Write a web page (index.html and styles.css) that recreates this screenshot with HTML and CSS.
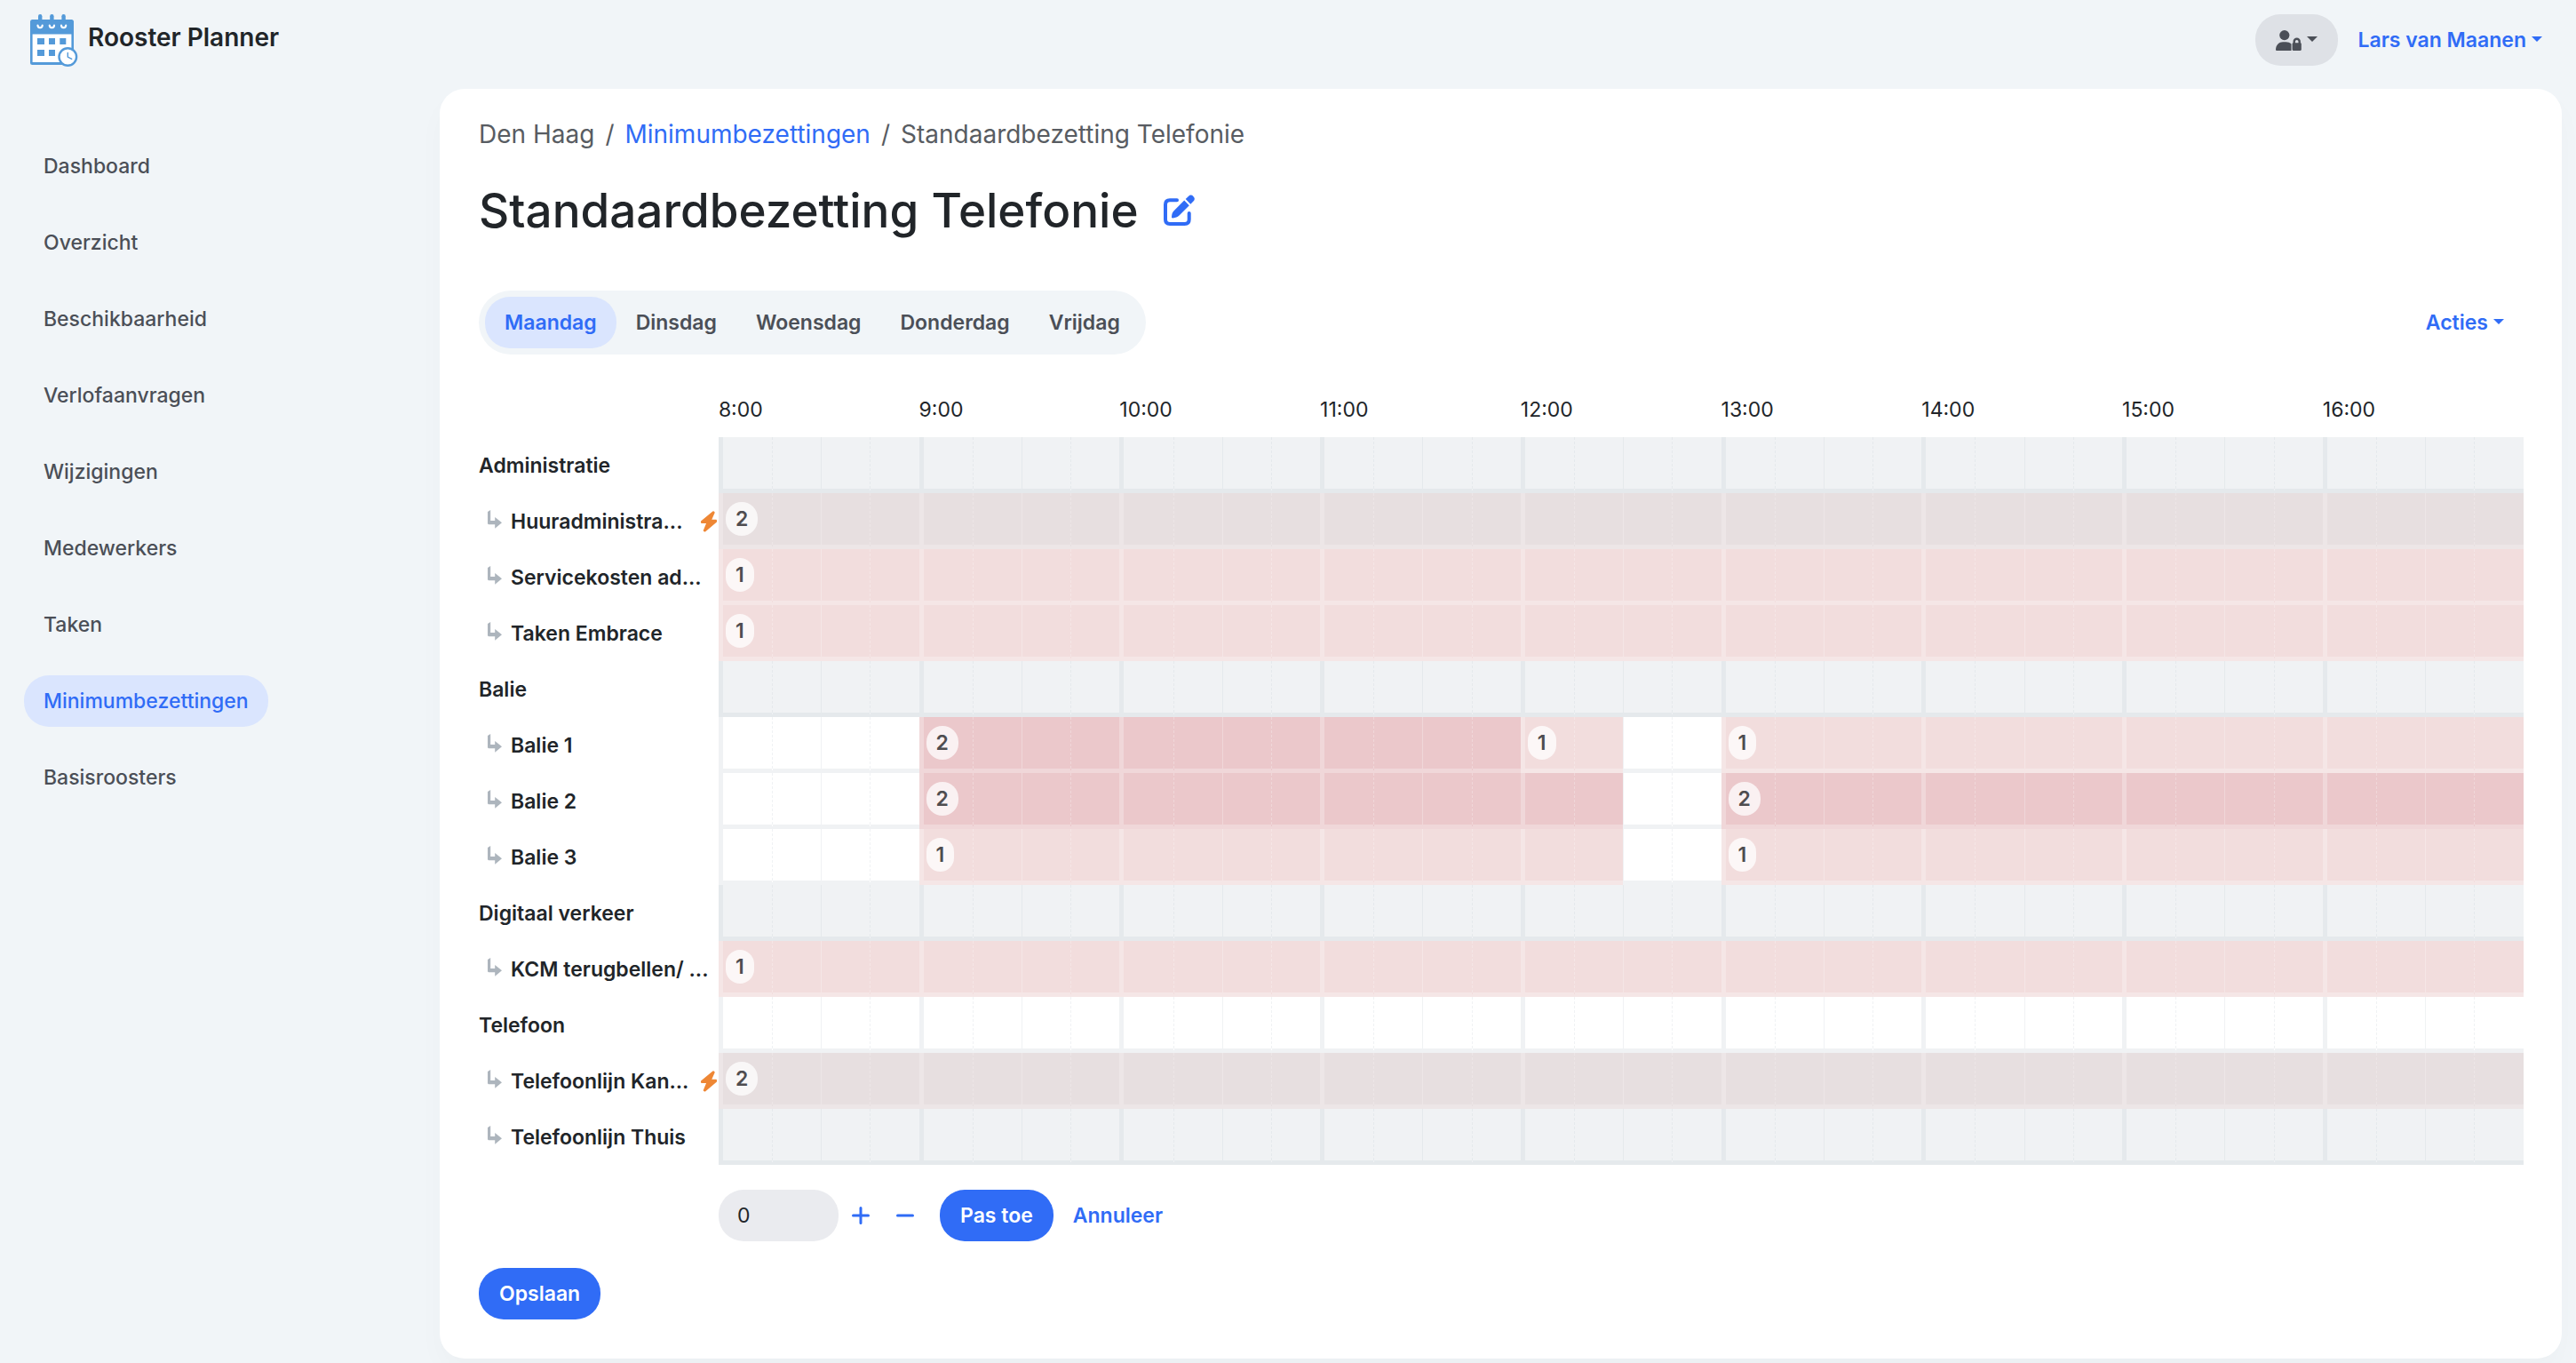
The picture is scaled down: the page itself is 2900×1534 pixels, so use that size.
FILE: index.html
```html
<!DOCTYPE html>
<html lang="nl">
<head>
  <meta charset="UTF-8">
  <meta name="viewport" content="width=device-width, initial-scale=1">
  <title>Rooster Planner</title>
  <link rel="stylesheet" href="styles.css">
</head>
<body>

  <header class="topbar">
    <a href="#" class="brand">
      <svg class="brand-logo" viewBox="0 0 54 60" aria-hidden="true">
        <rect x="0" y="6" width="49" height="51" rx="2.5" fill="#549ad9"/>
        <rect x="2.6" y="22.5" width="43.8" height="31.5" fill="#fff"/>
        <g fill="none" stroke="#fff" stroke-width="2.2" stroke-linecap="round">
          <path d="M8.5 12.5a2.6 2.6 0 0 0 5.2 0M21.8 12.5a2.6 2.6 0 0 0 5.2 0M35 12.5a2.6 2.6 0 0 0 5.2 0"/>
        </g>
        <g fill="#549ad9">
          <rect x="9" y="0" width="4.4" height="12" rx="2.2"/>
          <rect x="22.2" y="0" width="4.4" height="12" rx="2.2"/>
          <rect x="35.4" y="0" width="4.4" height="12" rx="2.2"/>
          <rect x="8" y="27" width="8" height="7"/>
          <rect x="21" y="27" width="7" height="7"/>
          <rect x="33.3" y="27" width="7" height="7"/>
          <rect x="8" y="40" width="8" height="7"/>
          <rect x="21" y="40" width="7" height="7"/>
        </g>
        <circle cx="42.3" cy="48" r="9.8" fill="#fff" stroke="#549ad9" stroke-width="2.4"/>
        <path d="M42.3 43.4V48l4.4 2.4" fill="none" stroke="#549ad9" stroke-width="1.4" stroke-linecap="round"/>
      </svg>
      <span>Rooster Planner</span>
    </a>
    <div class="topbar-actions">
      <button type="button" class="btn btn-grey caret" aria-label="Rol">
        <svg class="user-icon" viewBox="0 0 29 23" aria-hidden="true">
          <circle cx="9.8" cy="5.6" r="5.6"/>
          <path d="M0 22v-.5C.2 16.500 3.800 13.300 8 13.300h3.500c2.400 0 4.400.8 6 2.100V23H1a1 1 0 0 1-1-1z"/>
          <path d="M20 14.200h7.500q1.300 0 1.300 1.300v6q0 1.500-1.500 1.500h-7.200q-1.500 0-1.500-1.500v-6q0-1.300 1.400-1.300z"/>
          <path d="M20.700 15v-2.300a3 3 0 0 1 6 0V15" fill="none" stroke="#4b4f57" stroke-width="2.400"/>
        </svg>
      </button>
      <button type="button" class="btn btn-link caret">Lars van Maanen</button>
    </div>
  </header>

  <div class="layout">
    <nav class="sidebar">
      <a href="#">Dashboard</a>
      <a href="#">Overzicht</a>
      <a href="#">Beschikbaarheid</a>
      <a href="#">Verlofaanvragen</a>
      <a href="#">Wijzigingen</a>
      <a href="#">Medewerkers</a>
      <a href="#">Taken</a>
      <a href="#" class="active">Minimumbezettingen</a>
      <a href="#">Basisroosters</a>
    </nav>

    <main class="card">
      <div class="breadcrumb">
        <span>Den Haag</span>
        <span>/</span>
        <a href="#">Minimumbezettingen</a>
        <span>/</span>
        <span>Standaardbezetting Telefonie</span>
      </div>

      <div class="title">
        <h1>Standaardbezetting Telefonie</h1>
        <button type="button" class="edit" aria-label="Naam wijzigen">
          <svg viewBox="0 0 36 36" aria-hidden="true">
            <path d="M15 6.300H7Q2 6.300 2 11.300V28q0 5 5 5h16.700q5 0 5-5v-7" fill="none" stroke="#306cf6" stroke-width="4" stroke-linecap="round"/>
            <path d="M9 25.200c.2-3.300.8-5.200 2.800-7.200L23.200 6.600l5.600 5.600L17.500 23.500c-2 2-3.900 2.600-7.200 2.900-.9.1-1.400-.4-1.300-1.200z"/>
            <path d="M24.700 5.100l3.200-3.200q2.700-2.700 5.500 0 2.800 2.800.1 5.600l-3.200 3.200z"/>
          </svg>
        </button>
      </div>

      <div class="toolbar">
        <div class="tabs">
          <button type="button" class="btn active">Maandag</button>
          <button type="button" class="btn">Dinsdag</button>
          <button type="button" class="btn">Woensdag</button>
          <button type="button" class="btn">Donderdag</button>
          <button type="button" class="btn">Vrijdag</button>
        </div>
        <button type="button" class="btn btn-link caret">Acties</button>
      </div>

      <table class="planning">
        <colgroup id="cols"><col class="col-label"></colgroup>
        <thead>
          <tr id="hours"><td></td></tr>
        </thead>
        <tbody id="rows"></tbody>
      </table>

      <form class="apply">
        <input type="text" class="amount" value="0" aria-label="Aantal">
        <button type="button" class="step" aria-label="Meer">
          <svg viewBox="0 0 20 20" aria-hidden="true"><path d="M10 1.500v17M1.500 10h17"/></svg>
        </button>
        <button type="button" class="step" aria-label="Minder">
          <svg viewBox="0 0 20 20" aria-hidden="true"><path d="M1.500 10h17"/></svg>
        </button>
        <button type="button" class="btn btn-primary">Pas toe</button>
        <button type="button" class="btn btn-link">Annuleer</button>
      </form>

      <button type="button" class="btn btn-primary">Opslaan</button>
    </main>
  </div>

  <script>
    const startHour = 8;
    const endHour = 17;
    const quarters = (endHour - startHour) * 4;

    // spans: [first quarter, end quarter, minimum]
    const planning = [
      { name: 'Administratie', group: true, closed: true },
      { name: 'Huuradministra...', closed: true, bolt: true, spans: [[0, 36, 2]] },
      { name: 'Servicekosten ad...', spans: [[0, 36, 1]] },
      { name: 'Taken Embrace', spans: [[0, 36, 1]] },
      { name: 'Balie', group: true, closed: true },
      { name: 'Balie 1', spans: [[4, 16, 2], [16, 18, 1], [20, 36, 1]] },
      { name: 'Balie 2', spans: [[4, 18, 2], [20, 36, 2]] },
      { name: 'Balie 3', spans: [[4, 18, 1], [20, 36, 1]] },
      { name: 'Digitaal verkeer', group: true, closed: true },
      { name: 'KCM terugbellen/ ...', spans: [[0, 36, 1]] },
      { name: 'Telefoon', group: true },
      { name: 'Telefoonlijn Kan...', closed: true, bolt: true, spans: [[0, 36, 2]] },
      { name: 'Telefoonlijn Thuis', closed: true }
    ];

    const arrow = '<svg class="arrow" viewBox="0 0 16 26" aria-hidden="true"><path d="M0 2l3.200-2v12h5V8l7.800 6.300-7.800 6.400v-4.400H1.500Q0 16.300 0 14.800z"/></svg>';
    const bolt = '<svg class="bolt" viewBox="0 0 18 24" aria-hidden="true"><path d="M14 1.200L1 12v1h6.500L3.800 22.200l.8.400L17 12v-1.200h-6.300l4-8.900z"/></svg>';

    const cols = document.getElementById('cols');
    const hours = document.getElementById('hours');
    for (let h = startHour; h < endHour; h++) {
      cols.innerHTML += '<col class="col-hour"><col><col><col>';
      hours.innerHTML += `<th scope="col" colspan="4">${h}:00</th>`;
    }

    function renderCell(row, q) {
      const span = (row.spans || []).find(s => q >= s[0] && q < s[1]);
      const line = q % 4 === 0 ? 'hour' : q % 4 === 2 ? 'half' : 'quarter';
      const classes = [line];
      if (row.closed) classes.push('closed');
      if (span) classes.push('min-' + span[2]);
      const badge = span && span[0] === q ? `<span class="badge">${span[2]}</span>` : '';
      return `<td class="${classes.join(' ')}">${badge}</td>`;
    }

    document.getElementById('rows').innerHTML = planning.map(row => {
      let cells = '';
      for (let q = 0; q < quarters; q++) cells += renderCell(row, q);
      return `<tr>
        <th scope="row"><div class="label ${row.group ? '' : 'child'}">
          ${row.group ? '' : arrow}<span>${row.name}</span>${row.bolt ? bolt : ''}
        </div></th>${cells}
      </tr>`;
    }).join('');
  </script>

</body>
</html>
```
FILE: styles.css
```css
* {
  box-sizing: border-box;
}

body {
  margin: 0;
  background: #f1f5f8;
  color: #212529;
  font-family: Inter, "Liberation Sans", sans-serif;
  font-size: 23px;
  line-height: 34px;
}

a {
  color: #306cf6;
  text-decoration: none;
}

button, input {
  font: inherit;
  border: 0;
  background: none;
}

button {
  cursor: pointer;
  padding: 0;
}

svg {
  display: block;
  fill: currentColor;
}

/* Buttons */
.btn {
  display: inline-flex;
  align-items: center;
  height: 58px;
  padding: 0 23px;
  border-radius: 28px;
  color: #4b4f57;
  font-weight: 600;
  white-space: nowrap;
}

.btn-grey {
  background: #dee1e6;
}

.btn-link {
  padding: 0 22px;
  color: #306cf6;
}

.btn-primary {
  background: #306cf6;
  color: #fff;
}

.caret::after {
  content: "";
  margin-left: 6px;
  margin-bottom: 2px;
  border: 6px solid transparent;
  border-top-color: currentColor;
  border-bottom: 0;
}

/* Header */
.topbar {
  display: flex;
  justify-content: space-between;
  padding: 16px 16px 26px 34px;
}

.brand {
  display: flex;
  height: 58px;
  gap: 11px;
  color: #212529;
  font-size: 28px;
  font-weight: 600;
  line-height: 53px;
}

.brand-logo {
  width: 54px;
  height: 60px;
}

.topbar-actions {
  display: flex;
}

.user-icon {
  width: 29px;
  height: 23px;
}

/* Layout */
.layout {
  display: flex;
}

.sidebar {
  flex: 0 0 495px;
  display: flex;
  flex-direction: column;
  align-items: flex-start;
  gap: 28px;
  padding: 58px 27px;
}

.sidebar a {
  padding: 12px 22px;
  border-radius: 28px;
  color: #4b4f57;
  font-weight: 500;
}

.sidebar a.active {
  background: #dae5fe;
  color: #306cf6;
}

.card {
  flex: 1;
  min-width: 0;
  margin: 0 16px 6px 0;
  padding: 30px 43px 44px 44px;
  border-radius: 28px;
  background: #fff;
  box-shadow: 0 16px 32px rgba(0, 0, 0, 0.025);
}

.breadcrumb {
  display: flex;
  gap: 12px;
  color: #585c62;
  font-size: 28px;
  line-height: 42px;
}

.title {
  display: flex;
  align-items: center;
  gap: 28px;
  margin-top: 33px;
}

.title h1 {
  margin: 0;
  font-size: 53px;
  font-weight: 500;
  line-height: 64px;
}

.edit {
  color: #306cf6;
}

.edit svg {
  width: 36px;
  height: 36px;
}

.toolbar {
  display: flex;
  align-items: center;
  justify-content: space-between;
  margin: 58px 0 30px;
}

.tabs {
  display: flex;
  padding: 7px;
  border-radius: 36px;
  background: #f1f5f8;
}

.tabs .btn {
  padding: 0 22px;
}

.tabs .active {
  background: #dae5fe;
  color: #306cf6;
}

/* Planning grid */
.planning {
  width: 100%;
  table-layout: fixed;
  border-collapse: separate;
  border-spacing: 0;
}

.planning col {
  width: 55px;
}

.planning .col-label {
  width: 269px;
}

.planning .col-hour {
  width: 60px;
}

.planning th {
  padding: 0;
  text-align: left;
  font-weight: 600;
}

.planning thead th {
  height: 63px;
  font-weight: 400;
}

.planning tbody td {
  height: 63px;
  padding: 0;
  border: 0 solid #f0f2f4;
  border-bottom-width: 5px;
}

.planning td.hour {
  border-left-width: 5px;
}

.planning td.half {
  border-left-width: 1px;
}

.planning td.quarter {
  border-left: 1px dashed #f0f2f4;
}

.planning td.closed {
  background: #f0f2f4;
  border-color: #e5e9ec;
}

.planning td.min-1 {
  background: #f2dddd;
  border-color: #f5e6e6;
}

.planning td.min-2 {
  background: #ebc8cb;
  border-color: #f0d7d9;
}

.planning td.closed.min-2 {
  background: #e7dfe0;
  border-color: #ede6e7;
}

.label {
  display: flex;
  align-items: center;
  white-space: nowrap;
}

.label.child {
  gap: 10px;
  padding: 0 2px 0 10px;
}

.arrow {
  flex: none;
  width: 16px;
  height: 26px;
  color: #adb5bd;
}

.bolt {
  flex: none;
  width: 18px;
  height: 24px;
  margin-left: auto;
  color: #ee8735;
  stroke: currentColor;
  stroke-width: 2px;
  stroke-linejoin: round;
}

.badge {
  display: block;
  width: fit-content;
  margin-left: 3px;
  padding: 0 11px;
  border-radius: 19px;
  background: rgba(255, 255, 255, 0.75);
  color: #4f4d50;
  font-weight: 600;
  line-height: 38px;
}

/* Apply form */
.apply {
  display: flex;
  align-items: center;
  margin: 28px 0 30px 270px;
}

.amount {
  width: 135px;
  height: 58px;
  padding: 0 21px;
  border-radius: 28px;
  background: #eaebef;
  color: #212529;
}

.step {
  padding: 15px;
  color: #306cf6;
}

.step svg {
  width: 20px;
  height: 20px;
  fill: none;
  stroke: currentColor;
  stroke-width: 3px;
  stroke-linecap: round;
}

.apply .btn-primary {
  margin-left: 14px;
}
```
